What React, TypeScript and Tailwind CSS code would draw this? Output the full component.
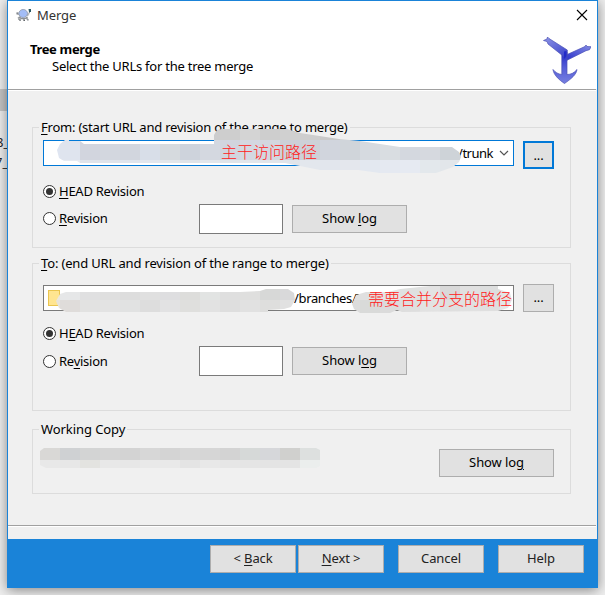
import React from "react";

type Cell = [number, number, string];

// one 20px tile of a smudged-out area: x, y, color
const fromCells: Cell[] = [
  [40, 140, "#dfe5f1"], [60, 140, "#dfe4ee"], [80, 140, "#d2d5de"], [100, 140, "#d3d7df"],
  [120, 140, "#d2d6de"], [140, 140, "#d8dee8"], [160, 140, "#d6dade"], [180, 140, "#ced3dc"],
  [200, 140, "#d4d8e0"], [220, 140, "#d1d5de"], [240, 140, "#d4d8e1"], [260, 140, "#d3d7df"],
  [280, 140, "#ccd0d8"], [300, 140, "#cdd1d8"], [320, 140, "#d1d5dd"], [340, 140, "#d0d5da"],
  [360, 140, "#d6dae0"], [380, 140, "#d9dde1"], [400, 140, "#d4d8df"], [420, 140, "#d6d9df"],
  [440, 140, "#ced3d8"], [460, 140, "#ced3d8"],
  [200, 120, "#cccccd"], [220, 120, "#cecece"], [240, 120, "#d4d4d4"], [260, 120, "#cecece"],
  [280, 120, "#d0d0d0"], [300, 120, "#cecece"], [320, 120, "#c9c9c9"], [340, 120, "#d0d2d4"],
  [40, 160, "#e6eaf1"], [60, 160, "#e6eaf1"], [80, 160, "#dfe3ea"], [100, 160, "#dfe3ea"],
  [120, 160, "#dfe4ec"], [140, 160, "#e2e6ed"], [160, 160, "#e2e6ea"], [180, 160, "#dfe3e8"],
  [200, 160, "#e2e6eb"], [220, 160, "#e0e4e9"], [240, 160, "#e2e6eb"], [260, 160, "#e1e5ea"],
  [280, 160, "#e0e4ea"], [300, 160, "#e3e7ed"], [320, 160, "#e2e6ed"], [340, 160, "#e4e7ed"],
  [360, 160, "#e3e8f0"], [380, 160, "#e5e9f1"], [400, 160, "#e6eaf2"], [420, 160, "#e3e8ec"],
  [440, 160, "#e2e6ea"],
];

const toCells: Cell[] = [
  [40, 280, "#ebe7df"], [60, 280, "#e6e7e8"], [80, 280, "#e0e0e1"], [100, 280, "#dfdfdf"],
  [120, 280, "#dddddd"], [140, 280, "#e0e0e0"], [160, 280, "#dedee0"], [180, 280, "#dddddb"],
  [200, 280, "#e2e4e3"], [220, 280, "#dfdfdf"], [240, 280, "#dfdfde"], [260, 280, "#d7d8d7"],
  [280, 280, "#d9d9da"],
  [40, 300, "#e7e3dc"], [60, 300, "#dfdcda"], [80, 300, "#e2e2e1"], [100, 300, "#e3e3e3"],
  [120, 300, "#e1e2e2"], [140, 300, "#dddddd"], [160, 300, "#e2e2e3"], [180, 300, "#dfdfdd"],
  [200, 300, "#e2e2e2"], [220, 300, "#dedede"], [240, 300, "#e1e1e1"], [260, 300, "#dededd"],
  [280, 300, "#e1e1e1"],
  [340, 280, "#dfe0e0"], [360, 280, "#e0e0e0"], [380, 280, "#e4e4e4"], [400, 280, "#dfe1e0"],
  [420, 280, "#e3e3e3"], [440, 280, "#d9d9d9"], [460, 280, "#e1e1e1"], [480, 280, "#dddede"],
  [500, 280, "#e3e6e5"],
  [340, 300, "#dcdcdc"], [360, 300, "#d9dad9"], [380, 300, "#dbdbdb"], [400, 300, "#dedede"],
  [420, 300, "#e2e2e2"], [440, 300, "#dfdfdf"], [460, 300, "#e1e1e1"], [480, 300, "#dfdfdf"],
  [500, 300, "#e4e6e6"],
];

const copyCells: Cell[] = [
  [40, 440, "#d9d8d6"], [60, 440, "#cfd1d3"], [80, 440, "#d3d4d4"], [100, 440, "#d5d5d5"],
  [120, 440, "#d3d3d3"], [140, 440, "#d7d7d7"], [160, 440, "#d4d4d4"], [180, 440, "#d7d7d7"],
  [200, 440, "#d6d6d6"], [220, 440, "#d3d3d3"], [240, 440, "#d6d9d8"], [260, 440, "#d6d7da"],
  [280, 440, "#d0d0ce"], [300, 440, "#dde0df"],
  [40, 460, "#e8e8e8"], [60, 460, "#e7e7e7"], [80, 460, "#e3e3e0"], [100, 460, "#e8e8e8"],
  [120, 460, "#e7e7e7"], [140, 460, "#e9e9e9"], [160, 460, "#e9e9e9"], [180, 460, "#e4e4e4"],
  [200, 460, "#e8e8e8"], [220, 460, "#e6e6e6"], [240, 460, "#e5e5e5"], [260, 460, "#e4e4e4"],
  [280, 460, "#e4e4e4"], [300, 460, "#ebeeed"],
];

const Smudge: React.FC<{ id: string; viewBox: string; path: string; cells: Cell[]; className: string }> = ({
  id,
  viewBox,
  path,
  cells,
  className,
}) => (
  <svg viewBox={viewBox} className={className} shapeRendering="crispEdges">
    <clipPath id={id}>
      <path d={path} />
    </clipPath>
    <g clipPath={`url(#${id})`}>
      {cells.map(([x, y, fill]) => (
        <rect key={`${x}-${y}`} x={x} y={y} width="20" height="20" fill={fill} />
      ))}
    </g>
  </svg>
);

const Turtle = () => (
  <svg className="h-4 w-4" viewBox="0 0 16 16">
    <path d="M.5 5.5L3 6.5M4 9l-2 1.500M4.500 10.500L4 12.500M10.500 10l1.500 2M8 11v1.500" stroke="#a4a8ac" strokeWidth="1.800" fill="none" />
    <path d="M.5 5h2M2.500 11.500l2 1M7.500 12.500h1.500M11.500 12h1" stroke="#63676b" strokeWidth="1" fill="none" />
    <path d="M3 9q4.500 3.500 8.500 0" stroke="#8c9094" strokeWidth="1.500" fill="none" />
    <path d="M11 8l2-3" stroke="#b9bdc0" strokeWidth="2" />
    <ellipse cx="7.200" cy="5.500" rx="4.300" ry="4" fill="#a3bdf6" stroke="#98a3b8" strokeWidth="1" />
    <path d="M12.500 1h2.500v3h-2z" fill="#2a5a66" />
    <path d="M13 4l1 1" stroke="#8c9094" strokeWidth="1" />
  </svg>
);

const MergeLogo = () => (
  <svg className="h-12 w-12" viewBox="0 0 48 48">
    <defs>
      <linearGradient id="leftArm" x1="0" y1="0" x2="1" y2="1">
        <stop offset="0" stopColor="#8f96e6" />
        <stop offset="1" stopColor="#3840ca" />
      </linearGradient>
      <linearGradient id="rightArm" x1="1" y1="0" x2="0" y2="1">
        <stop offset="0" stopColor="#858de4" />
        <stop offset="1" stopColor="#2a31ca" />
      </linearGradient>
      <linearGradient id="stem" x1="0" y1="0" x2="0" y2="1">
        <stop offset="0" stopColor="#2229c8" />
        <stop offset=".5" stopColor="#555ed8" />
        <stop offset="1" stopColor="#7780e0" />
      </linearGradient>
    </defs>
    <g stroke="#4a50b4" strokeWidth=".7" strokeLinejoin="round">
      <path d="M23.500 18.800L42 10.500l1-1.500 1 1.500 4 .2-1.500 3-3.500 1L23.500 24.500z" fill="url(#rightArm)" />
      <path d="M18.800 16H24v22.500c4 0 7-1.500 10-5-.5 5-6 9.500-12.500 14C15.500 43.500 10.500 38.500 10 33.500c2.500 3 5 4.500 8.800 5z" fill="url(#stem)" />
      <path d="M4.500 1L6 2.500 24.300 14v5.500l-3 1.500L5 8 4 5.500.5 4.500 4 3z" fill="url(#leftArm)" />
    </g>
    <path d="M21 15.500l2.500-.5v5L21 23z" fill="#2229c8" />
  </svg>
);

const Radio: React.FC<{ checked?: boolean; children: React.ReactNode }> = ({ checked, children }) => (
  <label className="flex h-4 w-[156px] items-center gap-[3px]">
    <span className="flex h-[13px] w-[13px] items-center justify-center rounded-full border border-[#333] bg-white">
      {checked && <span className="h-[7px] w-[7px] rounded-full bg-[#333]" />}
    </span>
    <span className="pt-0.5 tracking-[-0.26px]">{children}</span>
  </label>
);

const Button: React.FC<{ className: string; children: React.ReactNode }> = ({ className, children }) => (
  <button className={`flex h-7 shrink-0 justify-center border bg-[#e1e1e1] tracking-[-0.1px] whitespace-pre ${className}`}>
    <span className="leading-[25px]">{children}</span>
  </button>
);

const U: React.FC<{ children: React.ReactNode }> = ({ children }) => (
  <span className="underline decoration-1 underline-offset-2">{children}</span>
);

const Legend: React.FC<{ className: string; children: React.ReactNode }> = ({ className, children }) => (
  <div className={`-mt-2.5 ml-1.5 h-[18px] bg-[#f0f0f0] pl-0.5 leading-[18px] whitespace-nowrap ${className}`}>
    {children}
  </div>
);

const App: React.FC = () => {
  return (
    <main className="relative h-[595px] w-[605px] overflow-hidden bg-[#efefef] font-['Noto_Sans',sans-serif] text-[13px] text-black">
      {/* strip of the window behind */}
      <div className="absolute top-0 left-0 h-full w-2 overflow-hidden">
        <div className="mt-[89px] h-[22px] bg-[#c6c6c6]" />
        <div className="mt-[21px] -ml-1 leading-[20px] text-[#222]">8_</div>
        <div className="-ml-[5px] leading-[20px] text-[#222]">7_</div>
      </div>

      <div className="relative ml-[7px] flex h-[588px] w-[591px] flex-col border border-[#1a83d8] bg-[#f0f0f0] shadow-[0_2px_12px_rgba(0,0,0,0.45)]">
        <header className="h-[88px] bg-white">
          <div className="flex h-7 items-center justify-between pr-[9px] pl-2">
            <div className="flex items-center gap-[5px] pt-0.5">
              <Turtle />
              <span className="tracking-[-0.1px] text-[#333]">Merge</span>
            </div>
            <svg className="h-3 w-3" viewBox="0 0 12 12">
              <path d="M1 1l10 10M11 1L1 11" stroke="#000" strokeWidth="1.100" />
            </svg>
          </div>
          <div className="flex justify-between pr-1.5 pl-[22px]">
            <div className="pt-3 leading-[17px]">
              <h1 className="text-[13px] font-bold tracking-[-0.35px]">Tree merge</h1>
              <p className="pl-[22px] tracking-[-0.24px]">Select the URLs for the tree merge</p>
            </div>
            <div className="pt-[7px]">
              <MergeLogo />
            </div>
          </div>
        </header>
        <div className="mr-px h-0.5 border-t border-[#a0a0a0] bg-white" />

        <div className="flex h-[434px] flex-col pt-9 pl-6">
          <section className="relative h-[121px] w-[539px] border border-[#dcdcdc]">
            <Legend className="w-[311px] tracking-[-0.22px]">
              <U>F</U>rom: (start URL and revision of the range to merge)
            </Legend>
            <div className="mt-1 flex items-start gap-[9px] pl-2.5">
              <div className="flex h-[26px] w-[471px] items-center justify-end border border-[#0078d7] bg-white pr-1">
                <span className="pt-0.5 tracking-[-0.5px]">/trunk</span>
                <svg className="ml-1.5 h-2 w-2.5" viewBox="0 0 10 8">
                  <path d="M1 2l4 4 4-4" stroke="#555" strokeWidth="1.200" fill="none" />
                </svg>
              </div>
              <Button className="mt-px w-[31px] border-2 border-[#0078d7]">...</Button>
            </div>
            <div className="mt-[14px] flex items-end pl-2.5">
              <div className="flex h-[51px] flex-col gap-[11px]">
                <Radio checked><U>H</U>EAD Revision</Radio>
                <Radio><U>R</U>evision</Radio>
              </div>
              <div className="h-[30px] w-[84px] border border-[#7a7a7a] bg-white" />
              <Button className="mb-px ml-[9px] w-[115px] border-[#adadad]">Show <U>l</U>og</Button>
            </div>
            <Smudge
              id="fromSmudge"
              viewBox="56 126 408 48"
              className="absolute top-[-2px] left-[23px] h-12 w-[408px]"
              cells={fromCells}
              path="M57 150L60 144 65 140H69V141H80L84 144H214V135L217 130 222 129H287L300 133 339 139 360 141 400 147H452L459 152 461 157 459 162 453 167 436 173H380L358 170H320L300 166 285 163H80L77 161H64L59 158Z"
            />
            <p className="absolute top-[13px] left-[188px] font-['Noto_Sans_CJK_SC',sans-serif] text-base leading-5 font-light text-[#ff2020]">
              主干访问路径
            </p>
          </section>

          <section className="relative mt-[15px] h-[148px] w-[539px] border border-[#dcdcdc]">
            <Legend className="w-[292px] tracking-[-0.16px]">
              <U>T</U>o: (end URL and revision of the range to merge)
            </Legend>
            <div className="mt-[12px] flex items-start gap-[9px] pl-2.5">
              <div className="mt-px flex h-[26px] w-[471px] items-center border border-[#7a7a7a] bg-white pl-1">
                <span className="h-4 w-3 border border-[#eac54f] bg-[#ffe591]" />
                <span className="ml-[234px] pt-0.5 tracking-[-0.35px]">/branches/T</span>
              </div>
              <Button className="w-[31px] border-[#adadad]">...</Button>
            </div>
            <div className="mt-[13px] flex items-end pl-2.5">
              <div className="flex h-[51px] flex-col gap-3">
                <Radio checked>H<U>E</U>AD Revision</Radio>
                <Radio>Re<U>v</U>ision</Radio>
              </div>
              <div className="h-[30px] w-[84px] border border-[#7a7a7a] bg-white" />
              <Button className="mb-px ml-[9px] w-[115px] border-[#adadad]">Show l<U>o</U>g</Button>
            </div>
            <Smudge
              id="toSmudge"
              viewBox="56 284 458 30"
              className="absolute top-5 left-[23px] h-[30px] w-[458px]"
              cells={toCells}
              path="M56 301L60 294 66 292H240L260 291 266 289H288L294 293 295 300 291 307 284 309 268 310V312H66L59 308ZM352 304L356 295 366 292H388L400 289 430 286H498V289L510 293 512 300 508 308 498 311 402 312 397 310 390 313H360L354 309Z"
            />
            <p className="absolute top-6 left-[335px] font-['Noto_Sans_CJK_SC',sans-serif] text-base leading-5 font-light whitespace-nowrap text-[#ff2020]">
              需要合并分支的路径
            </p>
          </section>

          <section className="relative mt-[18px] h-[65px] w-[539px] border border-[#dcdcdc]">
            <Legend className="w-[88px] tracking-[-0.08px]">Working Copy</Legend>
            <div className="mt-[11px] flex justify-between pr-4 pl-[7px]">
              <Smudge
                id="copySmudge"
                viewBox="40 448 280 20"
                className="-mt-px h-5 w-[280px]"
                cells={copyCells}
                path="M40 451L44 448H316L320 450V466L316 468H46L40 465Z"
              />
              <Button className="w-[115px] border-[#adadad]">Show lo<U>g</U></Button>
            </div>
          </section>
        </div>

        <div className="mr-px h-[14px] border-t border-[#a0a0a0] bg-[#f0f0f0]">
          <div className="h-px bg-white" />
        </div>
        <footer className="flex flex-1 justify-end bg-[#1a83d8] pt-1.5 pr-[13px] text-[#222]">
          <Button className="w-[86px] border-[#adadad]">&lt; <U>B</U>ack</Button>
          <Button className="ml-0.5 w-[86px] border-[#adadad]"><U>N</U>ext &gt;</Button>
          <Button className="ml-[14px] w-[86px] border-[#adadad]">Cancel</Button>
          <Button className="ml-[14px] w-[86px] border-[#adadad]">Help</Button>
        </footer>
      </div>
    </main>
  );
};

export default App;
